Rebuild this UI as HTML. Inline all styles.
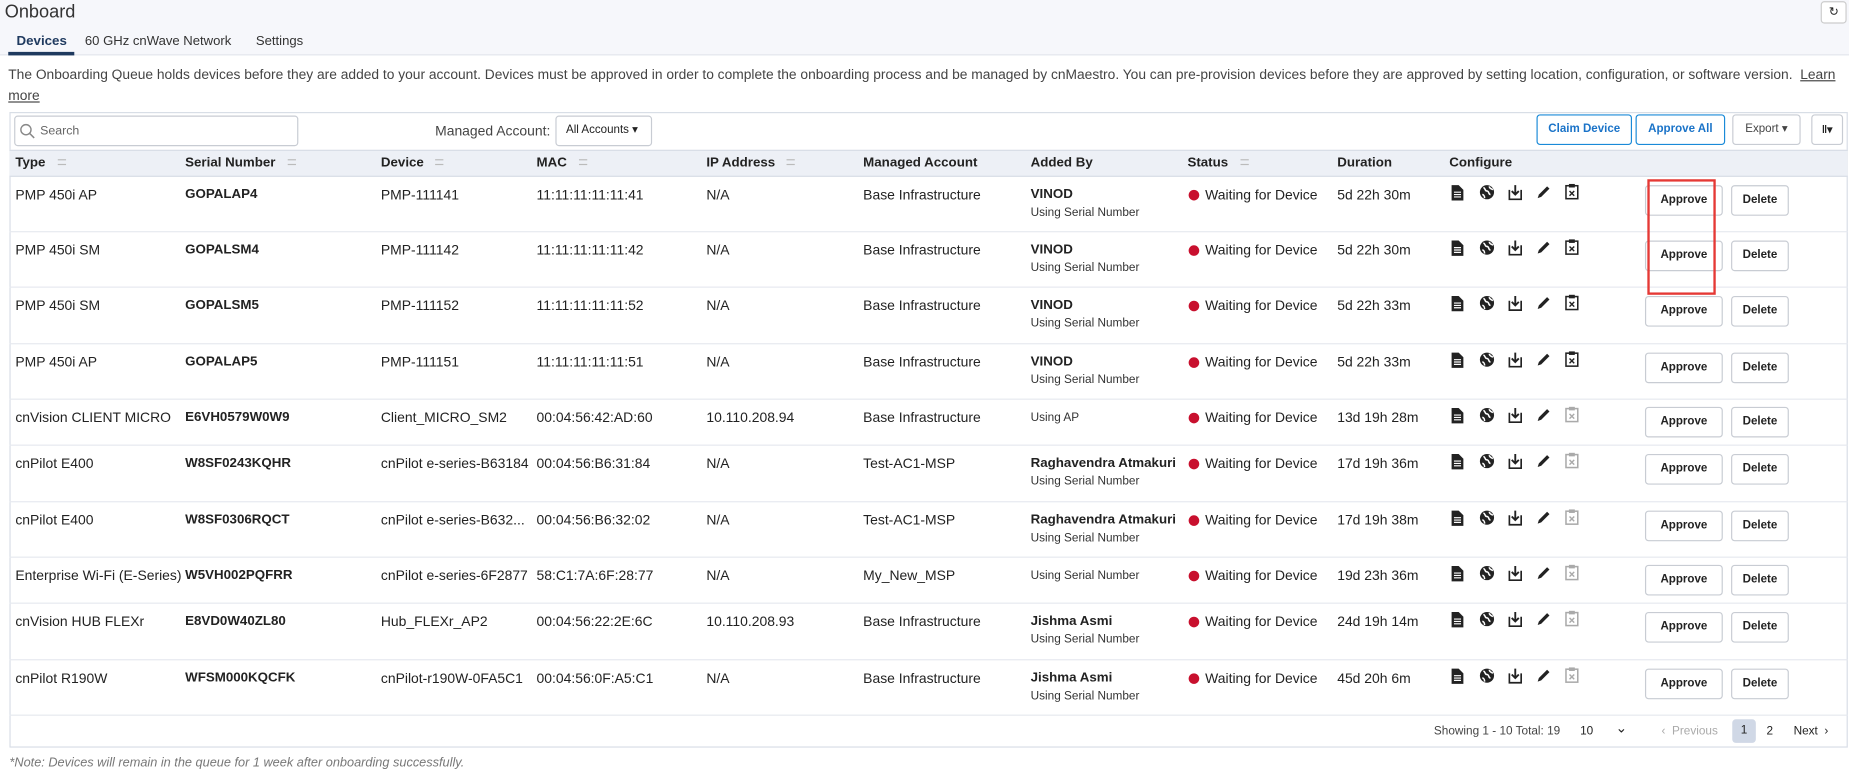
<!DOCTYPE html><html><head><style>
*{box-sizing:border-box;margin:0;padding:0}
body{width:1849px;height:782px;background:#fff;font-family:"Liberation Sans",sans-serif;color:#222;overflow:hidden;position:relative}
#w{position:absolute;left:0;top:0;width:1568px;height:663px;transform:scale(1.1792);transform-origin:0 0;font-size:11.8px}
.top{position:absolute;left:0;top:0;width:1568px;height:47px;background:#f6f7fb;border-bottom:1px solid #e3e6ec}
.a{position:absolute;white-space:nowrap;line-height:14px}
.tbl{position:absolute;left:8px;top:95px;width:1559px;height:539px;border:1px solid #d8dde6}
.hdr{position:absolute;left:8px;top:127px;width:1559px;height:23px;background:#edf0f6;border-top:1px solid #d8dde6;border-bottom:1px solid #d8dde6}
.row{position:absolute;left:8px;width:1559px;border-bottom:1px solid #e6e9ef}
.b{font-weight:bold;font-size:11.3px}
.btn{position:absolute;border:1px solid #c8ccd3;border-radius:3px;background:#fff;font-weight:bold;font-size:9.8px;text-align:center;line-height:24px;height:26px}
.dot{display:inline-block;width:9px;height:9px;border-radius:50%;background:#c8102e;margin-right:5px;vertical-align:-1px}
.sm{font-size:10px;color:#333}
.fi{display:inline-block;width:7px;height:5px;border-top:1px solid #bbb;border-bottom:1px solid #bbb;margin-left:10px;vertical-align:1px;position:relative}
.ic{position:absolute}
</style></head><body><div id="w">
<div class="top"></div>
<div class="a" style="left:4px;top:2px;font-size:15.4px;line-height:18px;color:#333">Onboard</div>
<div class="a" style="left:1544px;top:1px;width:22px;height:19px;border:1px solid #ccc;border-radius:3px;background:#fff;font-size:10px;text-align:center;line-height:17px">&#x21bb;</div>
<div class="a" style="left:14px;top:28px;font-size:11.3px;font-weight:bold;color:#1f3a5f">Devices</div>
<div class="a" style="left:7px;top:44px;width:56px;height:3px;background:#1f3a5f"></div>
<div class="a" style="left:72px;top:28px;font-size:11.1px;color:#333">60 GHz cnWave Network</div>
<div class="a" style="left:217px;top:28px;font-size:11.1px;color:#333">Settings</div>
<div class="a" style="left:7px;top:57px;font-size:11.7px;color:#444">The Onboarding Queue holds devices before they are added to your account. Devices must be approved in order to complete the onboarding process and be managed by cnMaestro. You can pre-provision devices before they are approved by setting location, configuration, or software version. &nbsp;<u>Learn</u></div>
<div class="a" style="left:7px;top:75px;font-size:11.7px;color:#444"><u>more</u></div>
<div class="tbl"></div>
<div class="a" style="left:12px;top:98px;width:241px;height:26px;border:1px solid #c8ccd3;border-radius:3px"></div>
<svg class="ic" style="left:16px;top:104px" width="14" height="14" viewBox="0 0 14 14"><circle cx="6" cy="6" r="4.3" fill="none" stroke="#888" stroke-width="1.2"/><path d="M9 9l4 4" stroke="#888" stroke-width="1.3"/></svg>
<div class="a" style="left:34px;top:104px;color:#666;font-size:10.5px">Search</div>
<div class="a" style="left:369px;top:104px;color:#444">Managed Account:</div>
<div class="a" style="left:471px;top:98px;width:82px;height:26px;border:1px solid #c8ccd3;border-radius:3px;font-size:9.8px;line-height:24px;padding-left:8px">All Accounts &#9662;</div>
<div class="btn" style="left:1303px;top:97px;width:81px;color:#1a73c8;border-color:#1a8ad8">Claim Device</div>
<div class="btn" style="left:1387px;top:97px;width:76px;color:#1a73c8;border-color:#1a8ad8">Approve All</div>
<div class="btn" style="left:1469px;top:97px;width:58px;font-weight:normal;color:#444">Export &#9662;</div>
<div class="btn" style="left:1536px;top:97px;width:27px;font-size:9px">&#x2016;&#9662;</div>
<div class="hdr"></div>
<div class="a b" style="left:13px;top:131px">Type<span class="fi"></span></div>
<div class="a b" style="left:157px;top:131px">Serial Number<span class="fi"></span></div>
<div class="a b" style="left:323px;top:131px">Device<span class="fi"></span></div>
<div class="a b" style="left:455px;top:131px">MAC<span class="fi"></span></div>
<div class="a b" style="left:599px;top:131px">IP Address<span class="fi"></span></div>
<div class="a b" style="left:732px;top:131px">Managed Account</div>
<div class="a b" style="left:874px;top:131px">Added By</div>
<div class="a b" style="left:1007px;top:131px">Status<span class="fi"></span></div>
<div class="a b" style="left:1134px;top:131px">Duration</div>
<div class="a b" style="left:1229px;top:131px">Configure</div>
<div id="rows"></div>
<div class="a" style="left:1216px;top:614px;font-size:10px;color:#444">Showing 1 - 10 Total: 19</div>
<div class="a" style="left:1340px;top:614px;font-size:10px">10</div>
<div class="a" style="left:1370px;top:610px;font-size:12px">&#8964;</div>
<div class="a" style="left:1409px;top:614px;font-size:10px;color:#aaa">&#8249; &nbsp;Previous</div>
<div class="a" style="left:1469px;top:610px;width:20px;height:20px;background:#d0d8e6;border-radius:3px;text-align:center;line-height:20px;font-size:10px">1</div>
<div class="a" style="left:1498px;top:614px;font-size:10px">2</div>
<div class="a" style="left:1521px;top:614px;font-size:10px">Next &nbsp;&#8250;</div>
<div class="a" style="left:8px;top:640px;font-style:italic;color:#777;font-size:10.8px">*Note: Devices will remain in the queue for 1 week after onboarding successfully.</div>
<div class="a" style="left:1397px;top:152px;width:58px;height:98px;border:2px solid #e53935"></div>
</div>
<script>
var R=[[150,47,"PMP 450i AP","GOPALAP4","PMP-111141","11:11:11:11:11:41","N/A","Base Infrastructure","VINOD","Using Serial Number","5d 22h 30m",1],
[197,47,"PMP 450i SM","GOPALSM4","PMP-111142","11:11:11:11:11:42","N/A","Base Infrastructure","VINOD","Using Serial Number","5d 22h 30m",1],
[244,48,"PMP 450i SM","GOPALSM5","PMP-111152","11:11:11:11:11:52","N/A","Base Infrastructure","VINOD","Using Serial Number","5d 22h 33m",1],
[292,47,"PMP 450i AP","GOPALAP5","PMP-111151","11:11:11:11:11:51","N/A","Base Infrastructure","VINOD","Using Serial Number","5d 22h 33m",1],
[339,39,"cnVision CLIENT MICRO","E6VH0579W0W9","Client_MICRO_SM2","00:04:56:42:AD:60","10.110.208.94","Base Infrastructure","","Using AP","13d 19h 28m",0],
[378,48,"cnPilot E400","W8SF0243KQHR","cnPilot e-series-B63184","00:04:56:B6:31:84","N/A","Test-AC1-MSP","Raghavendra Atmakuri","Using Serial Number","17d 19h 36m",0],
[426,47,"cnPilot E400","W8SF0306RQCT","cnPilot e-series-B632...","00:04:56:B6:32:02","N/A","Test-AC1-MSP","Raghavendra Atmakuri","Using Serial Number","17d 19h 38m",0],
[473,39,"Enterprise Wi-Fi (E-Series)","W5VH002PQFRR","cnPilot e-series-6F2877","58:C1:7A:6F:28:77","N/A","My_New_MSP","","Using Serial Number","19d 23h 36m",0],
[512,48,"cnVision HUB FLEXr","E8VD0W40ZL80","Hub_FLEXr_AP2","00:04:56:22:2E:6C","10.110.208.93","Base Infrastructure","Jishma Asmi","Using Serial Number","24d 19h 14m",0],
[560,47,"cnPilot R190W","WFSM000KQCFK","cnPilot-r190W-0FA5C1","00:04:56:0F:A5:C1","N/A","Base Infrastructure","Jishma Asmi","Using Serial Number","45d 20h 6m",0]];
var h="";
var doc='<path d="M2 1h6l4 4v9H2z" fill="#222"/><path d="M4 7h6M4 9h6M4 11h6" stroke="#fff" stroke-width="1"/>';
var glob='<circle cx="7" cy="7" r="6" fill="#222"/><path d="M4 3c2 1 1 3 3 3s1 3 3 3M9 2c0 2 2 2 3 3M3 9c1 0 2 1 2 3" stroke="#fff" stroke-width="1.3" fill="none"/>';
var dl='<path d="M2 5v8h10V5" fill="none" stroke="#222" stroke-width="1.4"/><path d="M7 1v8M4 6l3 3 3-3" fill="none" stroke="#222" stroke-width="1.6"/>';
var pen='<path d="M2 12l1-3 7-7 2 2-7 7z" fill="#222"/>';
function clip(c){return '<rect x="2" y="2.5" width="10" height="11" fill="none" stroke="'+c+'" stroke-width="1.3"/><rect x="4.5" y="1" width="5" height="3" fill="'+c+'"/><path d="M5 7l4 4M9 7l-4 4" stroke="'+c+'" stroke-width="1.2"/>';}
R.forEach(function(r){var t=r[0],y=t+8;
h+='<div class="row" style="top:'+t+'px;height:'+r[1]+'px"></div>';
h+='<div class="a" style="left:13px;top:'+y+'px">'+r[2]+'</div>';
h+='<div class="a b" style="left:157px;top:'+y+'px">'+r[3]+'</div>';
h+='<div class="a" style="left:323px;top:'+y+'px">'+r[4]+'</div>';
h+='<div class="a" style="left:455px;top:'+y+'px">'+r[5]+'</div>';
h+='<div class="a" style="left:599px;top:'+y+'px">'+r[6]+'</div>';
h+='<div class="a" style="left:732px;top:'+y+'px">'+r[7]+'</div>';
if(r[8]){h+='<div class="a b" style="left:874px;top:'+y+'px">'+r[8]+'</div><div class="a sm" style="left:874px;top:'+(y+16)+'px">'+r[9]+'</div>';}
else h+='<div class="a sm" style="left:874px;top:'+(y+1)+'px">'+r[9]+'</div>';
h+='<div class="a" style="left:1008px;top:'+y+'px"><span class="dot"></span>Waiting for Device</div>';
h+='<div class="a" style="left:1134px;top:'+y+'px">'+r[10]+'</div>';
var iy=t+6;
h+='<svg class="ic" style="left:1229px;top:'+iy+'px" width="14" height="15">'+doc+'</svg>';
h+='<svg class="ic" style="left:1254px;top:'+iy+'px" width="14" height="15">'+glob+'</svg>';
h+='<svg class="ic" style="left:1278px;top:'+iy+'px" width="14" height="15">'+dl+'</svg>';
h+='<svg class="ic" style="left:1302px;top:'+iy+'px" width="14" height="15">'+pen+'</svg>';
h+='<svg class="ic" style="left:1326px;top:'+(iy-1)+'px" width="14" height="15">'+clip(r[11]?'#222':'#aaa')+'</svg>';
var by=t+(r[1]>42?7:6);
h+='<div class="btn" style="left:1395px;top:'+by+'px;width:66px">Approve</div>';
h+='<div class="btn" style="left:1468px;top:'+by+'px;width:49px">Delete</div>';
});
document.getElementById("rows").innerHTML=h;
</script>
</body></html>
